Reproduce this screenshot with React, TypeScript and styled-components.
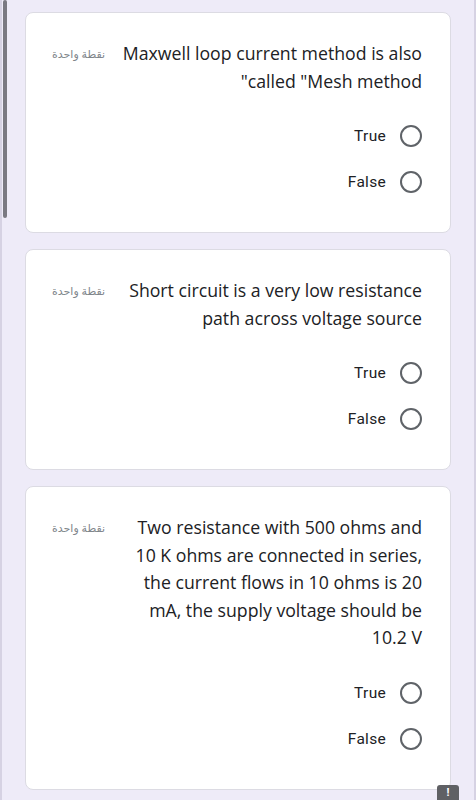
import React from 'react';
import styled, { createGlobalStyle } from 'styled-components';

interface Question {
  id: number;
  text: string;
}

const questions: Question[] = [
  { id: 1, text: 'Maxwell loop current method is also called "Mesh method"' },
  { id: 2, text: 'Short circuit is a very low resistance path across voltage source' },
  {
    id: 3,
    text: 'Two resistance with 500 ohms and 10 K ohms are connected in series, the current flows in 10 ohms is 20 mA, the supply voltage should be 10.2 V',
  },
];

const options = ['True', 'False'];

const GlobalStyle = createGlobalStyle`
  html, body {
    margin: 0;
    padding: 0;
    background: #eeebf8;
    font-family: Roboto, "Noto Sans", Arial, sans-serif;
  }
`;

const Page = styled.div`
  position: relative;
  direction: rtl;
  height: 800px;
  overflow: hidden;
  box-sizing: border-box;
  padding: 12px 25px 0;
  display: flex;
  flex-direction: column;
  gap: 16px;
  box-shadow: inset 2px 0 0 #d6d2e3, inset -2px 0 0 #d6d2e3;
`;

const Card = styled.div`
  background: #ffffff;
  border: 1px solid #dcdbe3;
  border-radius: 8px;
  padding: 27px 28px 27px 26px;
  flex-shrink: 0;
`;

const Header = styled.div`
  display: flex;
  align-items: flex-start;
  gap: 12px;
`;

const QuestionText = styled.div`
  flex: 1;
  font-family: "Open Sans", Roboto, sans-serif;
  font-size: 17.7px;
  line-height: 27.5px;
  color: #202124;
  text-align: right;
`;

const Points = styled.span`
  font-family: "Noto Sans", "DejaVu Sans", sans-serif;
  font-size: 11px;
  line-height: 27.5px;
  color: #80868b;
  white-space: nowrap;
`;

const OptionList = styled.div`
  margin-top: 18px;
  display: flex;
  flex-direction: column;
`;

const Option = styled.label`
  height: 46px;
  display: flex;
  align-items: center;
  gap: 14px;
  cursor: pointer;
`;

const Radio = styled.span`
  width: 22px;
  height: 22px;
  box-sizing: border-box;
  border: 2px solid #5f6368;
  border-radius: 50%;
  flex-shrink: 0;
`;

const OptionLabel = styled.span`
  font-size: 15.5px;
  letter-spacing: 0.3px;
  color: #202124;
`;

const Scrollbar = styled.div`
  position: absolute;
  left: 3px;
  top: 0;
  width: 4px;
  height: 218px;
  border-radius: 2px;
  background: #7a7982;
`;

const ReportButton = styled.div`
  position: absolute;
  left: 437px;
  top: 785px;
  width: 22px;
  height: 15px;
  border-radius: 3px 3px 0 0;
  background: #5f6064;
  color: #ffffff;
  font-size: 11px;
  font-weight: 700;
  line-height: 15px;
  text-align: center;
`;

export default function App() {
  return (
    <>
      <GlobalStyle />
      <Page>
        {questions.map((q) => (
          <Card key={q.id}>
            <Header>
              <QuestionText>{q.text}</QuestionText>
              <Points>نقطة واحدة</Points>
            </Header>
            <OptionList>
              {options.map((opt) => (
                <Option key={opt}>
                  <Radio />
                  <OptionLabel>{opt}</OptionLabel>
                </Option>
              ))}
            </OptionList>
          </Card>
        ))}
        <Scrollbar />
        <ReportButton>!</ReportButton>
      </Page>
    </>
  );
}
